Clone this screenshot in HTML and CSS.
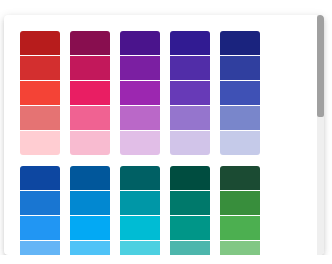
FILE: index.html
```html
<!DOCTYPE html>
<html>
<head>
<meta charset="utf-8">
<link rel="stylesheet" href="styles.css">
</head>
<body>
<div class="picker">
  <div class="swatches">
    <div class="swatch"><div class="c" style="background:#B71C1C"></div><div class="c" style="background:#D32F2F"></div><div class="c" style="background:#F44336"></div><div class="c" style="background:#E57373"></div><div class="c" style="background:#FFCDD2"></div></div>
    <div class="swatch"><div class="c" style="background:#880E4F"></div><div class="c" style="background:#C2185B"></div><div class="c" style="background:#E91E63"></div><div class="c" style="background:#F06292"></div><div class="c" style="background:#F8BBD0"></div></div>
    <div class="swatch"><div class="c" style="background:#4A148C"></div><div class="c" style="background:#7B1FA2"></div><div class="c" style="background:#9C27B0"></div><div class="c" style="background:#BA68C8"></div><div class="c" style="background:#E1BEE7"></div></div>
    <div class="swatch"><div class="c" style="background:#311B92"></div><div class="c" style="background:#512DA8"></div><div class="c" style="background:#673AB7"></div><div class="c" style="background:#9575CD"></div><div class="c" style="background:#D1C4E9"></div></div>
    <div class="swatch"><div class="c" style="background:#1A237E"></div><div class="c" style="background:#303F9F"></div><div class="c" style="background:#3F51B5"></div><div class="c" style="background:#7986CB"></div><div class="c" style="background:#C5CAE9"></div></div>

    <div class="swatch"><div class="c" style="background:#0D47A1"></div><div class="c" style="background:#1976D2"></div><div class="c" style="background:#2196F3"></div><div class="c" style="background:#64B5F6"></div><div class="c" style="background:#BBDEFB"></div></div>
    <div class="swatch"><div class="c" style="background:#01579B"></div><div class="c" style="background:#0288D1"></div><div class="c" style="background:#03A9F4"></div><div class="c" style="background:#4FC3F7"></div><div class="c" style="background:#B3E5FC"></div></div>
    <div class="swatch"><div class="c" style="background:#006064"></div><div class="c" style="background:#0097A7"></div><div class="c" style="background:#00BCD4"></div><div class="c" style="background:#4DD0E1"></div><div class="c" style="background:#B2EBF2"></div></div>
    <div class="swatch"><div class="c" style="background:#004D40"></div><div class="c" style="background:#00796B"></div><div class="c" style="background:#009688"></div><div class="c" style="background:#4DB6AC"></div><div class="c" style="background:#B2DFDB"></div></div>
    <div class="swatch"><div class="c" style="background:#1B4B33"></div><div class="c" style="background:#388E3C"></div><div class="c" style="background:#4CAF50"></div><div class="c" style="background:#81C784"></div><div class="c" style="background:#C8E6C9"></div></div>

    <div class="swatch"><div class="c" style="background:#33691E"></div><div class="c" style="background:#689F38"></div><div class="c" style="background:#8BC34A"></div><div class="c" style="background:#AED581"></div><div class="c" style="background:#DCEDC8"></div></div>
    <div class="swatch"><div class="c" style="background:#827717"></div><div class="c" style="background:#AFB42B"></div><div class="c" style="background:#CDDC39"></div><div class="c" style="background:#DCE775"></div><div class="c" style="background:#F0F4C3"></div></div>
    <div class="swatch"><div class="c" style="background:#F57F17"></div><div class="c" style="background:#FBC02D"></div><div class="c" style="background:#FFEB3B"></div><div class="c" style="background:#FFF176"></div><div class="c" style="background:#FFF9C4"></div></div>
    <div class="swatch"><div class="c" style="background:#FF6F00"></div><div class="c" style="background:#FFA000"></div><div class="c" style="background:#FFC107"></div><div class="c" style="background:#FFD54F"></div><div class="c" style="background:#FFECB3"></div></div>
    <div class="swatch"><div class="c" style="background:#E65100"></div><div class="c" style="background:#F57C00"></div><div class="c" style="background:#FF9800"></div><div class="c" style="background:#FFB74D"></div><div class="c" style="background:#FFE0B2"></div></div>
  </div>
  <div class="scrollbar"><div class="thumb"></div></div>
</div>
</body>
</html>
```
FILE: styles.css
```css
html, body {
  margin: 0;
  padding: 0;
  background: #ffffff;
}
body {
  padding: 15px 0 0 4px;
  font-family: "Roboto", "Liberation Sans", sans-serif;
}
.picker {
  position: relative;
  width: 320px;
  height: 240px;
  box-sizing: border-box;
  overflow: hidden;
  background: #ffffff;
  border-radius: 4px;
  box-shadow: 0 3px 3px -2px rgba(0,0,0,0.18), 0 3px 5px 0 rgba(0,0,0,0.12), 0 1px 8px 0 rgba(0,0,0,0.10);
}
.scrollbar {
  position: absolute;
  top: 0;
  right: 0;
  width: 7px;
  height: 100%;
  background: #efefef;
}
.thumb {
  width: 100%;
  height: 102px;
  background: #a0a0a0;
  border-radius: 3px 3px 2px 2px;
}
.swatches {
  display: grid;
  grid-template-columns: repeat(5, 40px);
  column-gap: 10px;
  row-gap: 11px;
  padding: 16px 16px 20px 16px;
  align-items: start;
}
.swatch {
  display: flex;
  flex-direction: column;
  gap: 1px;
  border-radius: 3px;
  overflow: hidden;
}
.c {
  height: 24px;
  width: 40px;
}
```
